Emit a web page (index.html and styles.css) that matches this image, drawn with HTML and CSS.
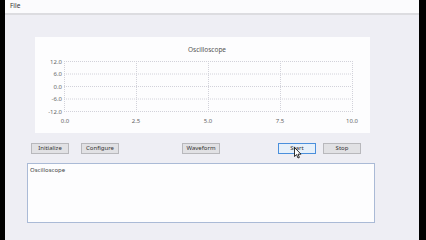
FILE: index.html
```html
<!DOCTYPE html>
<html>
<head>
<meta charset="utf-8">
<link rel="stylesheet" href="styles.css">
</head>
<body>
<div class="screen">
  <div class="edge-left"></div>
  <div class="window">
    <div class="menubar"><span class="menu-item">File</span></div>
    <div class="content">
      <div class="chart-panel">
        <svg class="chart" width="335" height="96" viewBox="0 0 335 96">
          <text class="title" x="172" y="15" text-anchor="middle">Oscilloscope</text>
          <g class="grid">
            <line x1="29" y1="24.5" x2="317" y2="24.5"/>
            <line x1="29" y1="37" x2="317" y2="37"/>
            <line x1="29" y1="49.5" x2="317" y2="49.5"/>
            <line x1="29" y1="62" x2="317" y2="62"/>
            <line x1="29" y1="74.5" x2="317" y2="74.5"/>
            <line x1="29.5" y1="24" x2="29.5" y2="76"/>
            <line x1="101.5" y1="24" x2="101.5" y2="76"/>
            <line x1="173.5" y1="24" x2="173.5" y2="76"/>
            <line x1="245.5" y1="24" x2="245.5" y2="76"/>
            <line x1="317.5" y1="24" x2="317.5" y2="76"/>
          </g>
          <g class="ylabels" text-anchor="end">
            <text x="27" y="26.5">12.0</text>
            <text x="27" y="39">6.0</text>
            <text x="27" y="51.5">0.0</text>
            <text x="27" y="64">-6.0</text>
            <text x="27" y="76.5">-12.0</text>
          </g>
          <g class="xlabels" text-anchor="middle">
            <text x="30" y="85.5">0.0</text>
            <text x="101" y="85.5">2.5</text>
            <text x="173" y="85.5">5.0</text>
            <text x="245" y="85.5">7.5</text>
            <text x="317" y="85.5">10.0</text>
          </g>
        </svg>
      </div>
      <div class="button-row">
        <button class="btn b-init">Initialize</button>
        <button class="btn b-conf">Configure</button>
        <button class="btn b-wave">Waveform</button>
        <button class="btn b-start hover">Start</button>
        <button class="btn b-stop">Stop</button>
      </div>
      <div class="log">Oscilloscope</div>
    </div>
    <svg class="cursor" width="8" height="12" viewBox="0 0 8 12">
      <path d="M0.5 0.5 L0.5 9.5 L2.6 7.6 L4 11 L5.4 10.4 L4 7.2 L7 7.2 Z" fill="#fff" stroke="#000" stroke-width="0.8"/>
    </svg>
  </div>
  <div class="edge-right"></div>
</div>
</body>
</html>
```

FILE: styles.css
```css
html, body {
  margin: 0;
  padding: 0;
  width: 426px;
  height: 240px;
  overflow: hidden;
  background: #000;
  font-family: "Noto Sans", "Open Sans", sans-serif;
}
.screen {
  display: flex;
  width: 426px;
  height: 240px;
}
.edge-left {
  width: 5px;
  background: #000;
  margin-top: 4px;
}
.edge-right {
  width: 7px;
  background: #000;
}
.window {
  position: relative;
  width: 414px;
  height: 240px;
  background: #eeeef4;
  display: flex;
  flex-direction: column;
}
.menubar {
  height: 13px;
  background: #fbfbfd;
  border-bottom: 2px solid #dcdce0;
  display: flex;
  align-items: center;
  padding-left: 5px;
}
.menu-item {
  font-size: 6.5px;
  color: #333;
  line-height: 1;
}
.content {
  display: flex;
  flex-direction: column;
  padding-top: 22px;
}
.chart-panel {
  margin-left: 30px;
  width: 335px;
  height: 96px;
  background: #fdfdfe;
}
.chart {
  display: block;
}
.chart text {
  font-family: "Noto Sans", "Open Sans", sans-serif;
  font-size: 6px;
  fill: #666;
}
.chart .title {
  font-size: 6.5px;
  fill: #555;
}
.grid line {
  stroke: #d2d2da;
  stroke-width: 1;
  stroke-dasharray: 1 1;
}
.button-row {
  display: flex;
  margin-top: 10px;
  height: 11px;
}
.btn {
  width: 38px;
  height: 11px;
  margin: 0;
  padding: 0;
  box-sizing: border-box;
  background: #e1e1e4;
  border: 1px solid #b8b8bc;
  font-family: "Noto Sans", "Open Sans", sans-serif;
  font-size: 6px;
  line-height: 9px;
  color: #333;
}
.btn.hover {
  background: #e6f0fa;
  border-color: #4a8fdc;
}
.b-init { margin-left: 26px; }
.b-conf { margin-left: 12px; }
.b-wave { margin-left: 63px; }
.b-start { margin-left: 58px; }
.b-stop { margin-left: 7px; }
.log {
  margin-top: 9px;
  margin-left: 22px;
  width: 348px;
  height: 60px;
  box-sizing: border-box;
  background: #fdfdfe;
  border: 1px solid #aabad6;
  font-size: 6px;
  color: #444;
  padding: 3px 2px;
  line-height: 1;
}
.cursor {
  position: absolute;
  left: 289px;
  top: 147px;
}
```
